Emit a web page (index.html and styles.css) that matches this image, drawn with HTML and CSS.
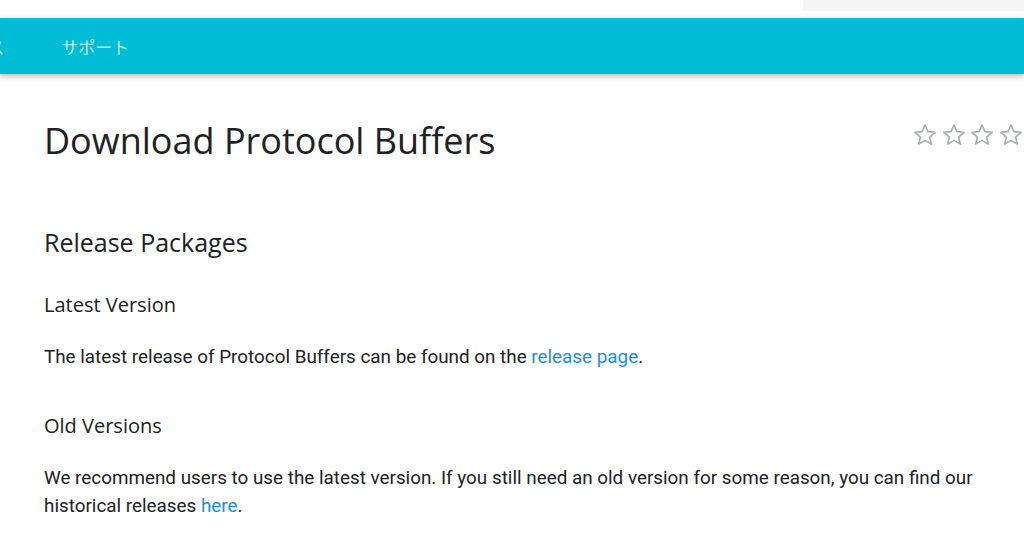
FILE: index.html
```html
<!DOCTYPE html>
<html lang="ja">
<head>
<meta charset="utf-8">
<title>Download Protocol Buffers</title>
<link rel="stylesheet" href="styles.css">
</head>
<body>
<header class="top">
  <div class="search"></div>
</header>
<nav class="tabs">
  <a class="tab tab-cut">リソース</a>
  <a class="tab">サポート</a>
</nav>
<main class="content">
  <div class="title-row">
    <h1 class="title">Download Protocol Buffers</h1>
    <div class="rating">
      <svg class="star" viewBox="0 0 24 24"><path d="M12 2.8l2.7 6.1 6.6.6-5 4.4 1.5 6.5L12 17l-5.8 3.4 1.5-6.5-5-4.4 6.6-.6z"/></svg>
      <svg class="star" viewBox="0 0 24 24"><path d="M12 2.8l2.7 6.1 6.6.6-5 4.4 1.5 6.5L12 17l-5.8 3.4 1.5-6.5-5-4.4 6.6-.6z"/></svg>
      <svg class="star" viewBox="0 0 24 24"><path d="M12 2.8l2.7 6.1 6.6.6-5 4.4 1.5 6.5L12 17l-5.8 3.4 1.5-6.5-5-4.4 6.6-.6z"/></svg>
      <svg class="star" viewBox="0 0 24 24"><path d="M12 2.8l2.7 6.1 6.6.6-5 4.4 1.5 6.5L12 17l-5.8 3.4 1.5-6.5-5-4.4 6.6-.6z"/></svg>
      <svg class="star" viewBox="0 0 24 24"><path d="M12 2.8l2.7 6.1 6.6.6-5 4.4 1.5 6.5L12 17l-5.8 3.4 1.5-6.5-5-4.4 6.6-.6z"/></svg>
    </div>
  </div>
  <h2 class="h2">Release Packages</h2>
  <h3 class="h3">Latest Version</h3>
  <p class="para">The latest release of Protocol Buffers can be found on the <a class="link" href="#">release page</a>.</p>
  <h3 class="h3">Old Versions</h3>
  <p class="para">We recommend users to use the latest version. If you still need an old version for some reason, you can find our historical releases <a class="link" href="#">here</a>.</p>
</main>
</body>
</html>
```
FILE: styles.css
```css
html, body {
  margin: 0;
  padding: 0;
  background: #fff;
  overflow: hidden;
}
body {
  width: 1024px;
  font-family: Roboto, "Noto Sans CJK JP", sans-serif;
  color: #202124;
}
.top {
  height: 18px;
  display: flex;
  justify-content: flex-end;
}
.search {
  width: 221px;
  height: 11px;
  background: #f5f5f5;
}
.tabs {
  height: 56px;
  background: #00bcd4;
  box-shadow: 0 2px 6px rgba(0, 0, 0, 0.3);
  display: flex;
  align-items: center;
  overflow: hidden;
  position: relative;
}
.tab {
  font-family: Roboto, "Noto Sans CJK JP", sans-serif;
  font-size: 17px;
  color: rgba(255, 255, 255, 0.75);
  margin-right: 57px;
  white-space: nowrap;
}
.tab-cut {
  margin-left: -63px;
}
.content {
  padding: 0 0 0 44px;
}
.title-row {
  display: flex;
  justify-content: space-between;
  align-items: flex-start;
  margin-top: 45px;
}
.title {
  font-family: "Open Sans", Lato, sans-serif;
  font-weight: 400;
  font-size: 36px;
  line-height: 44px;
  margin: 0;
  color: #202124;
}
.rating {
  display: flex;
  gap: 2.5px;
  margin-top: 3px;
  margin-right: -28px;
}
.star {
  width: 26px;
  height: 26px;
  fill: none;
  stroke: #a8acb0;
  stroke-width: 1.5;
  stroke-linejoin: round;
}
.h2 {
  font-family: "Open Sans", Lato, sans-serif;
  font-weight: 400;
  font-size: 25px;
  line-height: 32px;
  margin: 63px 0 0;
  color: #202124;
}
.h3 {
  font-family: "Open Sans", Lato, sans-serif;
  font-weight: 400;
  font-size: 20px;
  line-height: 28px;
  margin: 33px 0 0;
  color: #202124;
}
.para + .h3 {
  margin-top: 41px;
}
.para {
  font-size: 18.85px;
  line-height: 28px;
  margin: 24px 0 0;
  color: #202124;
  width: 950px;
}
.link {
  color: #1a8fe0;
  text-decoration: none;
}
```
